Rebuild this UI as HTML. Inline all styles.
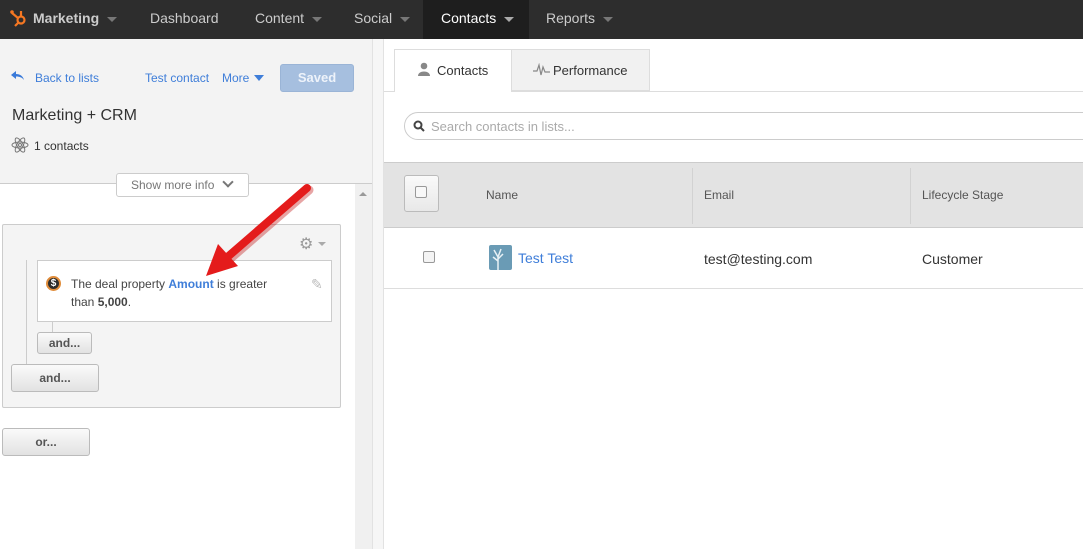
<!DOCTYPE html>
<html><head><meta charset="utf-8"><style>
*{box-sizing:border-box;margin:0;padding:0}
body{width:1083px;height:549px;overflow:hidden;background:#fff;font-family:"Liberation Sans",Arial,sans-serif;font-size:13px;color:#333;position:relative}
.a{position:absolute}
.nav{left:0;top:0;width:1083px;height:39px;background:#2d2d2d}
.ni{position:absolute;top:0;height:39px;line-height:37px;color:#ccc;font-size:14px}
.car{display:inline-block;width:0;height:0;border-left:5px solid transparent;border-right:5px solid transparent;border-top:5px solid #777;vertical-align:middle;margin-left:8px}
.btn{position:absolute;border:1px solid #bbb;border-radius:3px;background:linear-gradient(#fafafa,#e2e2e2);text-align:center;font-weight:bold;color:#555;font-size:12px}
</style></head><body>
<div class="a nav"></div>
<svg class="a" style="left:9px;top:8px" width="20" height="20" viewBox="0 0 20 20"><g stroke="#f57722" stroke-width="2.2" fill="none"><circle cx="12" cy="12" r="3.5"/><line x1="12" y1="8.5" x2="12" y2="3"/><line x1="9.5" y1="14.5" x2="6" y2="18"/><line x1="9" y1="10" x2="3" y2="5"/></g><circle cx="3" cy="4" r="1.8" fill="#f57722"/></svg>
<div class="ni" style="left:33px;font-weight:bold;color:#ccc">Marketing<span class="car"></span></div>
<div class="ni" style="left:150px">Dashboard</div>
<div class="ni" style="left:255px">Content<span class="car"></span></div>
<div class="ni" style="left:354px">Social<span class="car"></span></div>
<div class="a" style="left:423px;top:0;width:106px;height:39px;background:#1e1e1e"></div>
<div class="ni" style="left:441px;color:#fff">Contacts<span class="car" style="border-top-color:#aaa"></span></div>
<div class="ni" style="left:546px">Reports<span class="car"></span></div>

<div class="a" style="left:0;top:39px;width:372px;height:145px;background:#f3f3f3;border-bottom:1px solid #ccc"></div>
<div class="a" style="left:0;top:184px;width:355px;height:365px;background:#fff"></div>
<div class="a" style="left:355px;top:184px;width:17px;height:365px;background:#f0f0f0"></div>
<div class="a" style="left:359px;top:192px;border-left:4px solid transparent;border-right:4px solid transparent;border-bottom:4px solid #999"></div>
<div class="a" style="left:372px;top:39px;width:12px;height:510px;background:#f6f6f6;border-left:1px solid #e2e2e2;border-right:1px solid #e2e2e2"></div>

<svg class="a" style="left:11px;top:71px" width="14" height="10" viewBox="0 0 14 10"><path d="M5 0 L0 4 L5 8 V5.5 C9 5.5 11 6.5 13 9 C12 5 9 3 5 3 Z" fill="#3a7ad9"/></svg>
<div class="a" style="left:35px;top:71px;color:#3f7ed9;font-size:12px">Back to lists</div>
<div class="a" style="left:145px;top:71px;color:#3f7ed9;font-size:12px">Test contact</div>
<div class="a" style="left:222px;top:71px;color:#3f7ed9;font-size:12px">More</div>
<div class="a" style="left:254px;top:75px;border-left:5px solid transparent;border-right:5px solid transparent;border-top:6px solid #3f7ed9"></div>
<div class="a" style="left:280px;top:64px;width:74px;height:28px;border-radius:3px;background:#a6bfdf;border:1px solid #9ab4d6;color:#eef3fa;font-weight:bold;font-size:13px;text-align:center;line-height:26px">Saved</div>
<div class="a" style="left:12px;top:107px;font-size:16px;color:#333">Marketing + CRM</div>
<svg class="a" style="left:11px;top:136px" width="18" height="18" viewBox="0 0 18 18" fill="none" stroke="#777" stroke-width="1"><ellipse cx="9" cy="9" rx="8" ry="3"/><ellipse cx="9" cy="9" rx="8" ry="3" transform="rotate(60 9 9)"/><ellipse cx="9" cy="9" rx="8" ry="3" transform="rotate(-60 9 9)"/><circle cx="9" cy="9" r="1.5"/></svg>
<div class="a" style="left:34px;top:139px;font-size:12px">1 contacts</div>
<div class="a" style="left:116px;top:173px;width:133px;height:24px;background:#fff;border:1px solid #ccc;border-radius:3px;color:#777;font-size:12px;line-height:22px;padding-left:14px">Show more info <span style="display:inline-block;width:8px;height:8px;border-right:2px solid #777;border-bottom:2px solid #777;transform:rotate(45deg);margin:0 0 3px 6px"></span></div>

<div class="a" style="left:2px;top:224px;width:339px;height:184px;background:#f4f4f4;border:1px solid #ccc;border-radius:2px"></div>
<div class="a" style="left:299px;top:234px;color:#999;font-size:16px">⚙</div>
<div class="a" style="left:318px;top:242px;border-left:4px solid transparent;border-right:4px solid transparent;border-top:4px solid #aaa"></div>
<div class="a" style="left:26px;top:260px;width:1px;height:104px;background:#ccc"></div>
<div class="a" style="left:52px;top:321px;width:1px;height:12px;background:#ccc"></div>
<div class="a" style="left:37px;top:260px;width:295px;height:62px;background:#fff;border:1px solid #ccc"></div>
<div class="a" style="left:46px;top:276px;width:15px;height:15px;border-radius:50%;background:#2c2c2c;border:2px solid #e08c3a;color:#fff;font-size:10px;font-weight:bold;line-height:11px;text-align:center">$</div>
<div class="a" style="left:71px;top:275px;font-size:12px;line-height:18px;color:#444;width:220px">The deal property <b style="color:#3f7ed9">Amount</b> is greater than <b>5,000</b>.</div>
<div class="a" style="left:311px;top:276px;color:#bbb;font-size:14px">✎</div>
<div class="btn" style="left:37px;top:332px;width:55px;height:22px;line-height:20px">and...</div>
<div class="btn" style="left:11px;top:364px;width:88px;height:28px;line-height:26px">and...</div>
<div class="btn" style="left:2px;top:428px;width:88px;height:28px;line-height:26px">or...</div>

<svg class="a" style="left:200px;top:180px" width="115" height="100" viewBox="0 0 115 100"><line x1="107" y1="8" x2="22" y2="82" stroke="#b00" stroke-width="9" stroke-linecap="round" opacity=".35" transform="translate(2,2)"/><line x1="107" y1="8" x2="24" y2="80" stroke="#e41b1b" stroke-width="8" stroke-linecap="round"/><polygon points="6,96 18,64 38,86" fill="#e41b1b"/></svg>

<div class="a" style="left:384px;top:91px;width:699px;height:1px;background:#ddd"></div>
<div class="a" style="left:394px;top:49px;width:118px;height:43px;background:#fff;border:1px solid #ddd;border-bottom:none"></div>
<div class="a" style="left:511px;top:49px;width:139px;height:42px;background:#f1f1f1;border:1px solid #ddd"></div>
<svg class="a" style="left:417px;top:62px" width="14" height="14" viewBox="0 0 14 14"><circle cx="7" cy="4" r="3.3" fill="#888"/><path d="M1 14 C1 8 13 8 13 14Z" fill="#888"/></svg>
<div class="a" style="left:437px;top:63px;font-size:13px;color:#333">Contacts</div>
<svg class="a" style="left:533px;top:63px" width="17" height="14" viewBox="0 0 17 14"><path d="M0 8 H4 L6 2 L8 12 L10 4 L12 9 H17" fill="none" stroke="#888" stroke-width="1.2"/></svg>
<div class="a" style="left:553px;top:63px;font-size:13px;color:#333">Performance</div>
<div class="a" style="left:404px;top:112px;width:700px;height:28px;border:1px solid #ccc;border-radius:14px;background:#fff"></div>
<svg class="a" style="left:413px;top:120px" width="12" height="12" viewBox="0 0 12 12"><circle cx="5" cy="5" r="3.5" fill="none" stroke="#444" stroke-width="2"/><line x1="7.5" y1="7.5" x2="11" y2="11" stroke="#444" stroke-width="2"/></svg>
<div class="a" style="left:431px;top:119px;color:#aaa;font-size:13px">Search contacts in lists...</div>

<div class="a" style="left:384px;top:162px;width:699px;height:66px;background:#e3e3e3;border-top:1px solid #ccc;border-bottom:1px solid #ccc"></div>
<div class="a" style="left:692px;top:168px;width:1px;height:56px;background:#d2d2d2"></div>
<div class="a" style="left:910px;top:168px;width:1px;height:56px;background:#d2d2d2"></div>
<div class="a" style="left:404px;top:175px;width:35px;height:37px;border:1px solid #bbb;border-radius:3px;background:linear-gradient(#fafafa,#e8e8e8)"></div>
<div class="a" style="left:415px;top:186px;width:12px;height:12px;border:1px solid #999;border-radius:2px;background:#f8f8f8"></div>
<div class="a" style="left:486px;top:188px;color:#555;font-size:12px">Name</div>
<div class="a" style="left:704px;top:188px;color:#555;font-size:12px">Email</div>
<div class="a" style="left:922px;top:188px;color:#555;font-size:12px">Lifecycle Stage</div>
<div class="a" style="left:384px;top:288px;width:699px;height:1px;background:#ddd"></div>
<div class="a" style="left:423px;top:251px;width:12px;height:12px;border:1px solid #999;border-radius:2px;background:#f4f4f4"></div>
<svg class="a" style="left:489px;top:245px" width="23" height="25" viewBox="0 0 23 25"><rect width="23" height="25" rx="2" fill="#6a9bb5"/><path d="M9 25 V12 L5 5 M9 12 L12 4 M9 16 L4 12 M9 14 L14 9" stroke="#e8f1f5" stroke-width="1.5" fill="none"/></svg>
<div class="a" style="left:518px;top:250px;color:#3f7ed9;font-size:14px">Test Test</div>
<div class="a" style="left:704px;top:251px;color:#333;font-size:14px">test@testing.com</div>
<div class="a" style="left:922px;top:251px;color:#333;font-size:14px">Customer</div>
</body></html>
